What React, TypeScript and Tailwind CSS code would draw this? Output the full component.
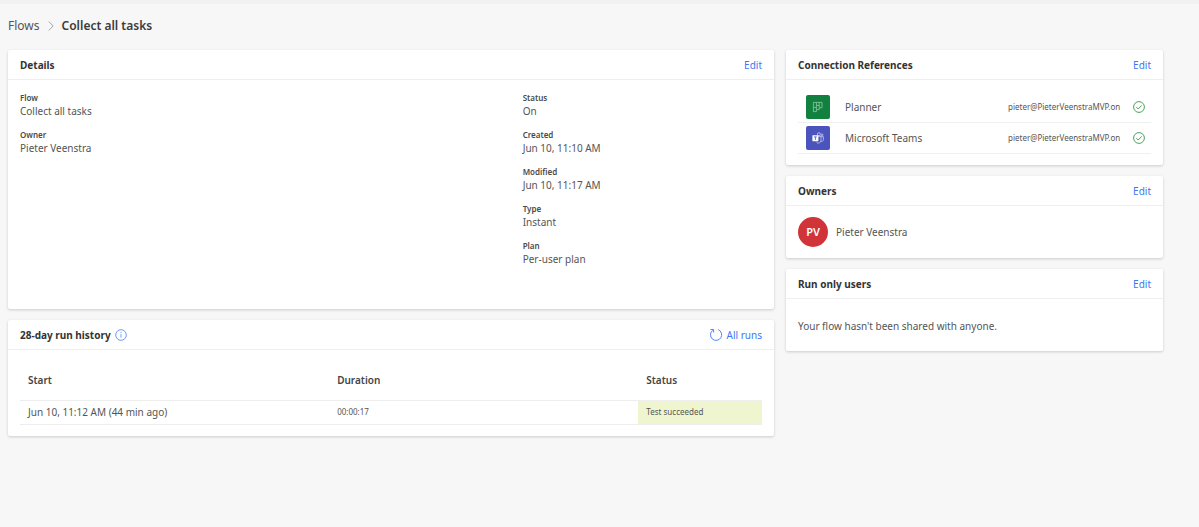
import React from 'react';

interface CardProps {
  title: string;
  titleIcon?: React.ReactNode;
  action: React.ReactNode;
  children: React.ReactNode;
}

const Card: React.FC<CardProps> = ({ title, titleIcon, action, children }) => (
  <section className="bg-white rounded-xs shadow-[0_1px_3px_rgba(0,0,0,0.18)]">
    <header className="flex items-center justify-between h-[30px] px-3 pt-px border-b border-[#efefef]">
      <div className="flex items-center gap-1">
        <h2 className="text-[10px] leading-4 font-bold text-[#333333]">{title}</h2>
        {titleIcon}
      </div>
      {action}
    </header>
    {children}
  </section>
);

const EditLink: React.FC = () => (
  <a href="#edit" className="text-[10px] leading-4 text-[#3b78f5]">
    Edit
  </a>
);

interface FieldProps {
  label: string;
  value: string;
}

const Field: React.FC<FieldProps> = ({ label, value }) => (
  <div>
    <dt className="text-[8px] leading-3 font-semibold text-[#4a4a4a]">{label}</dt>
    <dd className="text-[10px] leading-[14px] text-[#555555]">{value}</dd>
  </div>
);

const InfoIcon = () => (
  <svg viewBox="0 0 12 12" className="size-3" fill="none" stroke="#5b8ff9">
    <circle cx="6" cy="6" r="5.3" strokeWidth="0.9" />
    <path d="M6 5.2v3.3" strokeWidth="0.9" />
    <circle cx="6" cy="3.6" r="0.55" fill="#5b8ff9" stroke="none" />
  </svg>
);

const RefreshIcon = () => (
  <svg viewBox="0 0 14 14" className="size-[14px]" fill="none" stroke="#3b78f5" strokeWidth="0.9">
    <path d="M9.2 1.6A5.6 5.6 0 1 1 3.6 2.4" />
    <path d="M1.4 1.5h3.2v3" />
  </svg>
);

const CheckIcon = () => (
  <svg viewBox="0 0 12 12" className="size-3 shrink-0" fill="none" stroke="#4ba35c">
    <circle cx="6" cy="6" r="5.4" strokeWidth="1" />
    <path d="M3.4 6.2 5.2 8l3.5-3.6" strokeWidth="1" />
  </svg>
);

const PlannerIcon = () => (
  <svg viewBox="0 0 24 24" className="size-6" fill="none">
    <rect width="24" height="24" rx="2" fill="#12803f" />
    <g stroke="#8fcaa5" strokeWidth="0.8">
      <path d="M7.4 7.4h8.6v5.4h-2.8v1.8h-2.8v2h-3z" />
      <path d="M10.4 7.4v7.2M13.2 7.4v5.4M7.4 12.4h3M10.4 10.4h2.8" />
    </g>
  </svg>
);

const TeamsIcon = () => (
  <svg viewBox="0 0 24 24" className="size-6" fill="none">
    <rect width="24" height="24" rx="2" fill="#4b53bc" />
    <g stroke="#c9ccf0" strokeWidth="0.8">
      <circle cx="12.9" cy="8.2" r="1.5" />
      <circle cx="16" cy="8.9" r="1" />
      <path d="M12 10.4h3v4a2.6 2.6 0 0 1-4.6 1.7" />
      <path d="M15 10.7h2.4v2.9a1.9 1.9 0 0 1-2.5 1.8" />
    </g>
    <rect x="6.4" y="9.2" width="6" height="6" rx="0.4" fill="#ffffff" />
    <path d="M8 10.9h2.8M9.4 10.9v3" stroke="#4b53bc" strokeWidth="0.8" />
  </svg>
);

const flowInfo: FieldProps[] = [
  { label: 'Flow', value: 'Collect all tasks' },
  { label: 'Owner', value: 'Pieter Veenstra' },
];

const flowMeta: FieldProps[] = [
  { label: 'Status', value: 'On' },
  { label: 'Created', value: 'Jun 10, 11:10 AM' },
  { label: 'Modified', value: 'Jun 10, 11:17 AM' },
  { label: 'Type', value: 'Instant' },
  { label: 'Plan', value: 'Per-user plan' },
];

const connections = [
  { name: 'Planner', icon: <PlannerIcon />, account: 'pieter@PieterVeenstraMVP.on' },
  { name: 'Microsoft Teams', icon: <TeamsIcon />, account: 'pieter@PieterVeenstraMVP.on' },
];

const App: React.FC = () => {
  return (
    <div className="min-h-screen bg-[#f7f7f7] font-['Noto_Sans','Open_Sans',sans-serif] text-[#555555]">
      <div className="h-1 bg-[#f2f2f2]" />

      <nav aria-label="Breadcrumb" className="flex items-center gap-2 pl-2 pt-3 pb-[14px] text-[12px] leading-5">
        <a href="#flows" className="text-[#555555]">Flows</a>
        <svg viewBox="0 0 6 10" className="w-[6px] h-[10px]" fill="none" stroke="#999999" strokeWidth="0.9">
          <path d="M0.8 0.6 5.2 5 0.8 9.4" />
        </svg>
        <h1 className="font-semibold text-[#3b3b3b]">Collect all tasks</h1>
      </nav>

      <main className="grid grid-cols-3 items-start gap-3 pl-2 pr-9">
        <div className="col-span-2 flex flex-col gap-[11px]">
          <Card title="Details" action={<EditLink />}>
            <div className="grid grid-cols-3 gap-3 px-3 pt-3 pb-[43px]">
              <dl className="col-span-2 flex flex-col gap-[11px]">
                {flowInfo.map((field) => (
                  <Field key={field.label} {...field} />
                ))}
              </dl>
              <dl className="flex flex-col gap-[11px]">
                {flowMeta.map((field) => (
                  <Field key={field.label} {...field} />
                ))}
              </dl>
            </div>
          </Card>

          <Card
            title="28-day run history"
            titleIcon={<InfoIcon />}
            action={
              <a href="#runs" className="flex items-center gap-1 text-[10px] leading-4 text-[#3b78f5]">
                <RefreshIcon />
                All runs
              </a>
            }
          >
            <div className="px-3 pt-3 pb-[11px]">
              <table className="w-full table-fixed text-left">
                <thead>
                  <tr className="h-[38px] text-[10px] text-[#444444]">
                    <th className="w-5/12 pl-2 font-semibold">Start</th>
                    <th className="w-5/12 pl-2 font-semibold">Duration</th>
                    <th className="w-2/12 pl-2 font-semibold">Status</th>
                  </tr>
                </thead>
                <tbody>
                  <tr className="h-6 border-y border-[#eeeeee] text-[8px]">
                    <td className="pl-2 text-[10px]">Jun 10, 11:12 AM (44 min ago)</td>
                    <td className="pl-2">00:00:17</td>
                    <td className="pl-2 bg-[#eff6cf]">Test succeeded</td>
                  </tr>
                </tbody>
              </table>
            </div>
          </Card>
        </div>

        <div className="flex flex-col gap-[11px]">
          <Card title="Connection References" action={<EditLink />}>
            <ul className="px-3 pt-3 pb-[11px]">
              {connections.map((connection) => (
                <li
                  key={connection.name}
                  className="flex items-center h-[31px] pl-2 pr-[6px] border-b border-[#f0f0f0]"
                >
                  {connection.icon}
                  <span className="ml-[15px] grow text-[10px]">{connection.name}</span>
                  <span className="w-[117px] mr-2 whitespace-nowrap text-[8px]">
                    {connection.account}
                  </span>
                  <CheckIcon />
                </li>
              ))}
            </ul>
          </Card>

          <Card title="Owners" action={<EditLink />}>
            <div className="flex items-center gap-2 px-3 pt-[11px] pb-[11px]">
              <span className="flex items-center justify-center size-[30px] rounded-full bg-[#d13438] text-[11px] font-semibold text-white">
                PV
              </span>
              <span className="text-[10px]">Pieter Veenstra</span>
            </div>
          </Card>

          <Card title="Run only users" action={<EditLink />}>
            <p className="px-3 pt-5 pb-[18px] text-[10px] leading-[14px]">
              Your flow hasn't been shared with anyone.
            </p>
          </Card>
        </div>
      </main>
    </div>
  );
};

export default App;
